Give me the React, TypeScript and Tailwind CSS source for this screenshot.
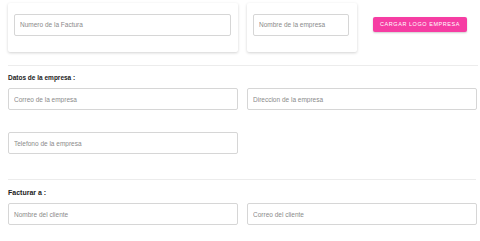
import type { ReactNode } from "react";

function Field({ placeholder, className = "" }: { placeholder: string; className?: string }) {
  return (
    <input
      className={`h-[22px] rounded-[2px] border border-[#d6d6d6] bg-white px-[5px] text-[6.5px] text-[#333] placeholder:text-[#8a8a8a] outline-none ${className}`}
      placeholder={placeholder}
    />
  );
}

function Card({ children, className = "" }: { children: ReactNode; className?: string }) {
  return (
    <div
      className={`h-[49px] rounded-[2px] bg-white px-[6px] pt-[7px] shadow-[0_1px_3px_rgba(0,0,0,0.18)] ${className}`}
    >
      {children}
    </div>
  );
}

export default function App() {
  return (
    <div className="min-h-[241px] bg-white px-2 pt-[3px] font-['Liberation_Sans',Arial,sans-serif]">
      <div className="flex items-start">
        <Card className="w-[230px]">
          <Field placeholder="Numero de la Factura" className="w-[217px]" />
        </Card>
        <Card className="ml-[9px] w-[110px]">
          <Field placeholder="Nombre de la empresa" className="w-[96px]" />
        </Card>
        <button className="ml-[16px] mt-[14px] h-[15px] w-[94px] rounded-[2px] bg-[#f63da3] text-[5.5px] tracking-[0.1em] text-white shadow-[0_1px_2px_rgba(0,0,0,0.2)]">
          CARGAR LOGO EMPRESA
        </button>
      </div>

      <div className="mt-[13px] w-[470px] border-t border-[#ececec]" />

      <div className="mt-[7px] text-[6.5px] font-bold leading-[10px] text-[#222]">
        Datos de la empresa :
      </div>
      <div className="mt-[5px] grid w-[469px] grid-cols-2 gap-x-[9px] gap-y-[22px]">
        <Field placeholder="Correo de la empresa" className="w-full" />
        <Field placeholder="Direccion de la empresa" className="w-full" />
        <Field placeholder="Telefono de la empresa" className="w-full" />
      </div>

      <div className="mt-[25px] w-[468px] border-t border-[#ececec]" />

      <div className="mt-[8px] text-[7px] font-bold leading-[10px] text-[#222]">Facturar a :</div>
      <div className="mt-[5px] grid w-[469px] grid-cols-2 gap-x-[9px]">
        <Field placeholder="Nombre del cliente" className="w-full" />
        <Field placeholder="Correo del cliente" className="w-full" />
      </div>
    </div>
  );
}
